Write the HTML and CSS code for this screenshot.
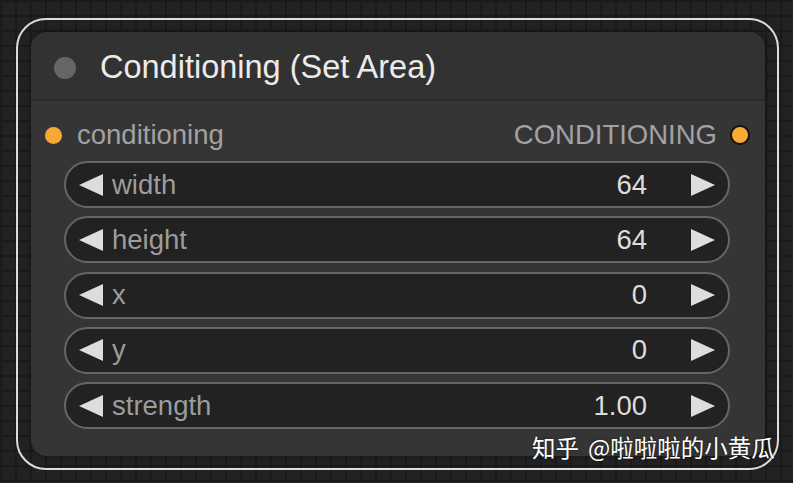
FILE: index.html
```html
<!DOCTYPE html>
<html>
<head>
<meta charset="utf-8">
<link rel="stylesheet" href="styles.css">
</head>
<body>
<div class="canvas">
  <div class="outline">
    <div class="node">
      <div class="title">
        <span class="title-dot"></span>
        <span class="title-text">Conditioning (Set Area)</span>
      </div>
      <div class="body">
        <div class="slots">
          <div class="slot-in"><span class="dot in"></span><span class="slot-label">conditioning</span></div>
          <div class="slot-out"><span class="slot-label">CONDITIONING</span><span class="dot out"></span></div>
        </div>
        <div class="widgets">
          <div class="widget"><span class="arrow left"></span><span class="w-label">width</span><span class="w-value">64</span><span class="arrow right"></span></div>
          <div class="widget"><span class="arrow left"></span><span class="w-label">height</span><span class="w-value">64</span><span class="arrow right"></span></div>
          <div class="widget"><span class="arrow left"></span><span class="w-label">x</span><span class="w-value">0</span><span class="arrow right"></span></div>
          <div class="widget"><span class="arrow left"></span><span class="w-label">y</span><span class="w-value">0</span><span class="arrow right"></span></div>
          <div class="widget"><span class="arrow left"></span><span class="w-label">strength</span><span class="w-value">1.00</span><span class="arrow right"></span></div>
        </div>
      </div>
    </div>
  </div>
  <div class="watermark"><span>知乎</span><span class="wm-user">@啦啦啦的小黄瓜</span></div>
</div>
</body>
</html>
```
FILE: styles.css
```css
html, body {
  margin: 0;
  padding: 0;
}
body {
  width: 793px;
  height: 483px;
  overflow: hidden;
  background-color: #222222;
  background-image:
    linear-gradient(to right, #1a1a1a 0 2px, transparent 2px),
    linear-gradient(to bottom, #1a1a1a 0 2px, transparent 2px);
  background-size: 15px 15px;
  font-family: "Liberation Sans", Arial, sans-serif;
}
.canvas {
  position: relative;
  width: 793px;
  height: 483px;
  padding: 18px 0 0 16px;
  box-sizing: border-box;
}
.outline {
  width: 763px;
  height: 452px;
  box-sizing: border-box;
  border: 2px solid #dcdcdc;
  border-radius: 30px;
  padding: 12px 0 0 13px;
}
.node {
  width: 734px;
  height: 424px;
  background: #353535;
  border-radius: 16px;
  overflow: hidden;
  box-shadow: 0 0 6px rgba(0,0,0,0.35);
  display: flex;
  flex-direction: column;
}
.title {
  height: 69px;
  flex: none;
  background: #323232;
  border-bottom: 2px solid #2a2a2a;
  display: flex;
  align-items: center;
  padding-top: 4px;
  box-sizing: border-box;
}
.title-dot {
  width: 22px;
  height: 22px;
  border-radius: 50%;
  background: #666666;
  margin-left: 23px;
  flex: none;
}
.title-text {
  margin-left: 24px;
  color: #ebebeb;
  font-size: 32.5px;
}
.body {
  padding: 14px 0 0 0;
}
.slots {
  height: 40px;
  display: flex;
  justify-content: space-between;
  align-items: center;
  margin-bottom: 6px;
}
.slot-in, .slot-out {
  display: flex;
  align-items: center;
}
.slot-label {
  color: #a2a2a2;
  font-size: 27.5px;
}
.dot {
  border-radius: 50%;
  background: #f7a933;
  flex: none;
}
.dot.in {
  width: 17px;
  height: 17px;
  margin-left: 14px;
  margin-right: 15px;
}
.dot.out {
  width: 16px;
  height: 16px;
  border: 2px solid #1c0f0c;
  margin-left: 13px;
  margin-right: 15px;
}
.widgets {
  display: flex;
  flex-direction: column;
  gap: 8.25px;
  padding: 0 35px 0 33px;
}
.widget {
  height: 47px;
  box-sizing: border-box;
  border: 2px solid #666666;
  border-radius: 24px;
  background: #222222;
  display: flex;
  align-items: center;
  padding: 0 13px;
}
.arrow {
  width: 0;
  height: 0;
  border-top: 11px solid transparent;
  border-bottom: 11px solid transparent;
  flex: none;
}
.arrow.left {
  border-right: 24px solid #dddddd;
}
.arrow.right {
  border-left: 24px solid #dddddd;
}
.w-label {
  margin-left: 9px;
  color: #9c9c9c;
  font-size: 27.5px;
  flex: 1;
}
.w-value {
  color: #dddddd;
  font-size: 27.5px;
  margin-right: 44px;
}
.watermark {
  position: absolute;
  left: 532px;
  top: 430px;
  color: #ffffff;
  font-family: "Noto Sans CJK SC", sans-serif;
  font-size: 23.5px;
  line-height: 34px;
  text-shadow: 0 0 2px rgba(0,0,0,0.6);
  white-space: nowrap;
  display: flex;
  gap: 9px;
}
```
